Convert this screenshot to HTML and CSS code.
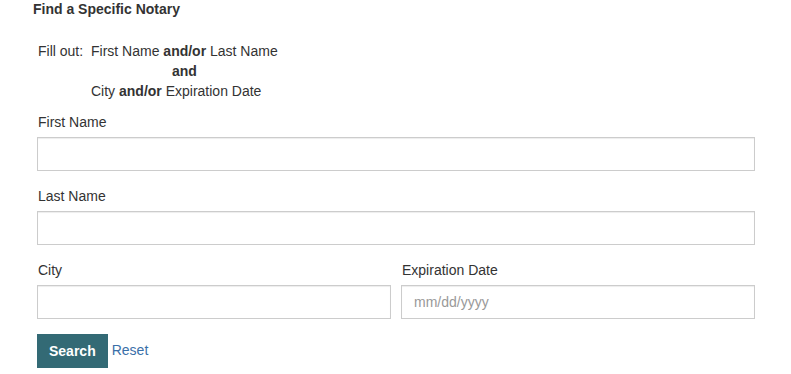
FILE: index.html
```html
<!DOCTYPE html>
<html>
<head>
<meta charset="utf-8">
<link rel="stylesheet" href="styles.css">
</head>
<body>
<div class="page">
  <h4 class="title">Find a Specific Notary</h4>
  <div class="intro">
    <div class="intro-label">Fill out:</div>
    <div class="intro-lines">
      <div>First Name <b>and/or</b> Last Name</div>
      <div class="center"><b>and</b></div>
      <div>City <b>and/or</b> Expiration Date</div>
    </div>
  </div>
  <form class="form">
    <div class="group">
      <label class="label">First Name</label>
      <input class="input" type="text">
    </div>
    <div class="group">
      <label class="label">Last Name</label>
      <input class="input" type="text">
    </div>
    <div class="row">
      <div class="group">
        <label class="label">City</label>
        <input class="input" type="text">
      </div>
      <div class="group">
        <label class="label">Expiration Date</label>
        <input class="input" type="text" placeholder="mm/dd/yyyy">
      </div>
    </div>
    <div class="actions">
      <button class="btn" type="button">Search</button>
      <a class="reset" href="#">Reset</a>
    </div>
  </form>
</div>
</body>
</html>
```
FILE: styles.css
```css
html, body {
  margin: 0;
  padding: 0;
  background: #fff;
}
body {
  font-family: "Liberation Sans", Arial, sans-serif;
  font-size: 14px;
  line-height: 20px;
  color: #333;
}
.page {
  padding: 0 36px 0 33px;
}
.title {
  margin: 0;
  font-size: 14px;
  font-weight: bold;
  line-height: 19px;
  color: #333;
}
.intro {
  display: flex;
  margin: 22px 0 0 5px;
}
.intro-label {
  width: 53px;
}
.intro-lines {
  display: inline-grid;
}
.intro-lines b {
  font-weight: bold;
}
.center {
  text-align: center;
}
.form {
  margin: 11px 0 0 4px;
}
.group {
  margin-bottom: 15px;
  display: flex;
  flex-direction: column;
}
.label {
  display: block;
  margin-bottom: 5px;
  margin-left: 1px;
}
.input {
  box-sizing: border-box;
  height: 34px;
  width: 100%;
  margin: 0;
  padding: 6px 12px;
  font-family: inherit;
  font-size: 14px;
  color: #555;
  border: 1px solid #ccc;
  border-radius: 0;
  box-shadow: inset 0 1px 1px rgba(0,0,0,.075);
  background: #fff;
  outline: none;
}
.input::placeholder {
  color: #999;
}
.row {
  display: grid;
  grid-template-columns: 1fr 1fr;
  column-gap: 10px;
}
.actions {
  display: flex;
  align-items: center;
  gap: 4px;
}
.btn {
  height: 34px;
  padding: 6px 12px;
  border: none;
  border-radius: 0;
  background: #336a75;
  color: #fff;
  font-family: inherit;
  font-size: 14px;
  font-weight: bold;
  line-height: 20px;
}
.reset {
  color: #3a6fa8;
  text-decoration: none;
  margin-top: -3px;
}
```
